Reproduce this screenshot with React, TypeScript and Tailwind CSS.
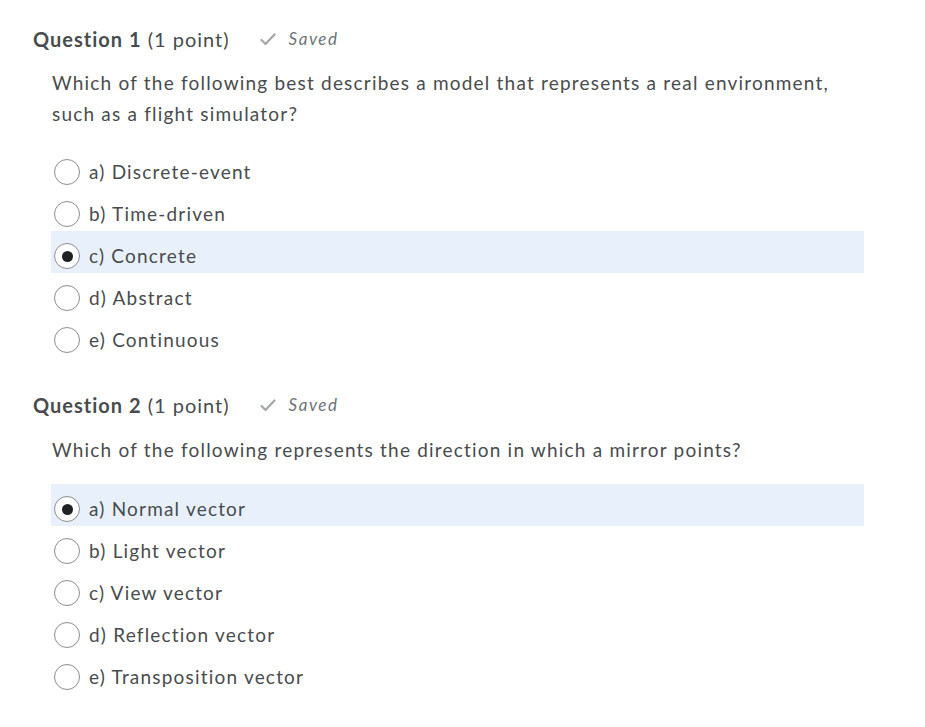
import { useState } from "react";

type Question = {
  number: number;
  prompt: string;
  options: string[];
  selected: number;
};

const questions: Question[] = [
  {
    number: 1,
    prompt:
      "Which of the following best describes a model that represents a real environment, such as a flight simulator?",
    options: ["a) Discrete-event", "b) Time-driven", "c) Concrete", "d) Abstract", "e) Continuous"],
    selected: 2,
  },
  {
    number: 2,
    prompt: "Which of the following represents the direction in which a mirror points?",
    options: ["a) Normal vector", "b) Light vector", "c) View vector", "d) Reflection vector", "e) Transposition vector"],
    selected: 0,
  },
];

function CheckIcon() {
  return (
    <svg width="16" height="13" viewBox="0 0 16 13" fill="none" className="shrink-0">
      <path d="M1.5 7 L5.5 11 L14.5 1.5" stroke="#a3a6a8" strokeWidth="2.2" strokeLinecap="round" strokeLinejoin="round" />
    </svg>
  );
}

function Radio({ checked }: { checked: boolean }) {
  return (
    <span className="flex h-[26px] w-[26px] shrink-0 items-center justify-center rounded-full border border-[#8a8d8f] bg-white">
      {checked && <span className="h-[11px] w-[11px] rounded-full bg-[#202122]" />}
    </span>
  );
}

function QuestionBlock({ q, first }: { q: Question; first: boolean }) {
  const [selected, setSelected] = useState(q.selected);
  return (
    <section className={first ? "pt-[25px]" : "pt-[34px]"}>
      <div className="flex items-center pl-[33px] leading-[28px]">
        <h2 className="text-[20px] tracking-[1px] text-[#494c4e]">
          <span className="font-bold">Question {q.number}</span> (1 point)
        </h2>
        <div className="ml-[30px] flex items-center gap-[13px] text-[17px] italic tracking-[1.5px] text-[#6e7376]">
          <CheckIcon />
          <span>Saved</span>
        </div>
      </div>
      <p
        className={
          "max-w-[864px] pl-[52px] text-[19px] leading-[31px] tracking-[1.2px] text-[#494c4e] " +
          (first ? "mt-[14px]" : "mt-[15px]")
        }
      >
        {q.prompt}
      </p>
      <div className={"ml-[51px] w-[813px] " + (first ? "mt-[18px]" : "mt-[19px]")}>
        {q.options.map((opt, i) => (
          <label
            key={opt}
            onClick={() => setSelected(i)}
            className={
              "flex h-[42px] cursor-pointer items-center gap-[9px] pl-[3px] pt-[8px] text-[19px] tracking-[1.2px] text-[#494c4e] " +
              (selected === i ? "bg-[#e8f1fb]" : "")
            }
          >
            <Radio checked={selected === i} />
            <span className="leading-[26px]">{opt}</span>
          </label>
        ))}
      </div>
    </section>
  );
}

export default function App() {
  return (
    <div className="min-h-[727px] w-full bg-white font-['Lato',sans-serif]">
      {questions.map((q, i) => (
        <QuestionBlock key={q.number} q={q} first={i === 0} />
      ))}
    </div>
  );
}
